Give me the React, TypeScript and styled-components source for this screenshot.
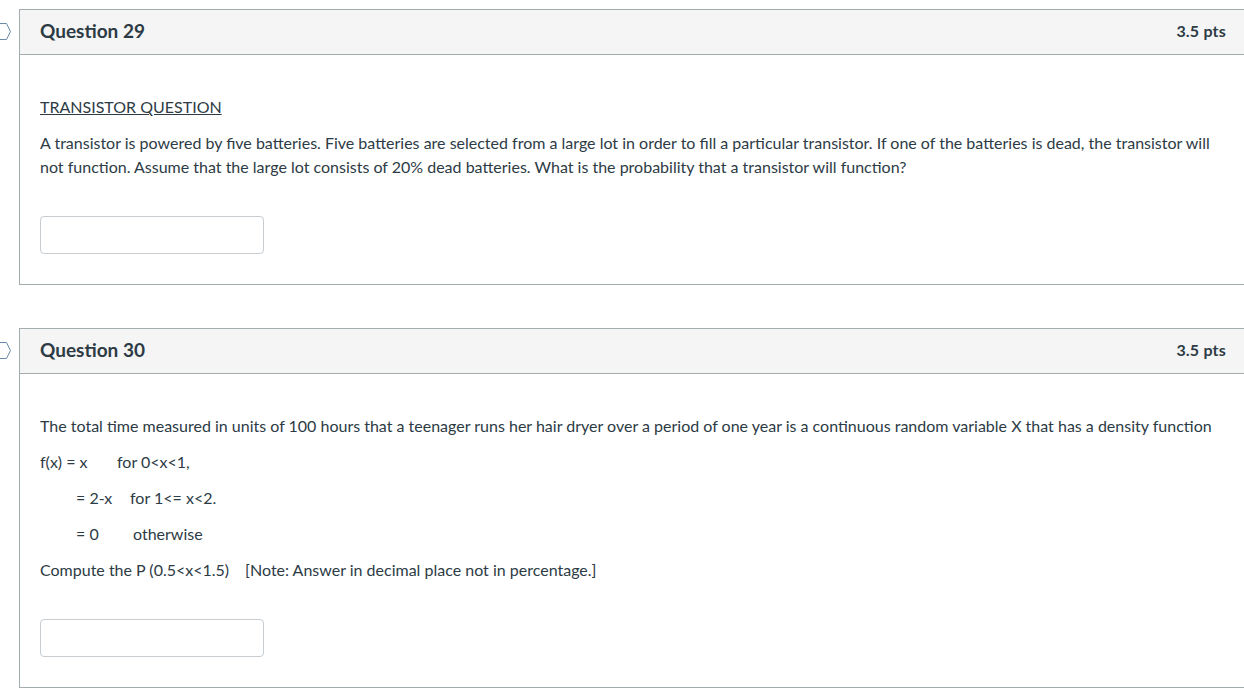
import React from 'react';
import styled, { createGlobalStyle } from 'styled-components';

const GlobalStyle = createGlobalStyle`
  html, body {
    margin: 0;
    padding: 0;
    background: #ffffff;
    overflow: hidden;
  }
  body {
    font-family: Lato, 'Noto Sans', sans-serif;
    color: #2d3b45;
  }
`;

const Page = styled.div`
  width: 1244px;
  padding-top: 9px;
  display: flex;
  flex-direction: column;
  gap: 43px;
`;

const QuestionRow = styled.div`
  display: flex;
  align-items: flex-start;
`;

const FlagCol = styled.div`
  width: 19px;
  flex-shrink: 0;
  padding-top: 13px;
`;

const Box = styled.div`
  width: 1260px;
  flex-shrink: 0;
  border: 1px solid #a5acb0;
  background: #fff;
`;

const Header = styled.div`
  display: flex;
  align-items: center;
  justify-content: space-between;
  height: 45px;
  box-sizing: border-box;
  padding: 0 54px 3px 20px;
  background: #f5f5f5;
  border-bottom: 1px solid #a5acb0;
`;

const Title = styled.div`
  font-size: 19px;
  font-weight: 700;
  color: #2d3b45;
`;

const Points = styled.div`
  font-size: 16px;
  font-weight: 700;
  color: #2d3b45;
  letter-spacing: 0.2px;
`;

const Body = styled.div`
  padding: 28px 20px 30px 20px;
`;

const Para = styled.p`
  margin: 12px 0;
  font-size: 16px;
  line-height: 24px;
  color: #2d3b45;
  max-width: 1185px;
`;

const Heading = styled.span`
  text-decoration: underline;
`;

const Line = styled.p<{ $indent?: number }>`
  margin: 12px 0;
  font-size: 16px;
  line-height: 24px;
  padding-left: ${(p) => p.$indent || 0}px;
  display: flex;
`;

const Expr = styled.span<{ $w: number }>`
  display: inline-block;
  width: ${(p) => p.$w}px;
`;

const Note = styled.span`
  margin-left: 16px;
`;

const Answer = styled.input`
  display: block;
  margin-top: 37px;
  width: 224px;
  height: 38px;
  box-sizing: border-box;
  border: 1px solid #c7cdd1;
  border-radius: 4px;
  background: #fff;
  font-family: inherit;
  font-size: 14px;
  padding: 0 8px;
`;

const Flag = () => (
  <svg width="12" height="19" viewBox="0 0 12 19">
    <path d="M-1 1.5 H6.5 L10.5 9.5 L6.5 17.5 H-1" fill="none" stroke="#6a8aa8" strokeWidth="1" />
  </svg>
);

const Question = ({ title, pts, children }: { title: string; pts: string; children: React.ReactNode }) => (
  <QuestionRow>
    <FlagCol>
      <Flag />
    </FlagCol>
    <Box>
      <Header>
        <Title>{title}</Title>
        <Points>{pts}</Points>
      </Header>
      <Body>
        {children}
        <Answer type="text" />
      </Body>
    </Box>
  </QuestionRow>
);

export default function App() {
  return (
    <>
      <GlobalStyle />
      <Page>
        <Question title="Question 29" pts="3.5 pts">
          <Para>
            <Heading>TRANSISTOR QUESTION</Heading>
          </Para>
          <Para>
            A transistor is powered by five batteries. Five batteries are selected from a large lot in order to fill a
            particular transistor. If one of the batteries is dead, the transistor will not function. Assume that the
            large lot consists of 20% dead batteries. What is the probability that a transistor will function?
          </Para>
        </Question>
        <Question title="Question 30" pts="3.5 pts">
          <Para>
            The total time measured in units of 100 hours that a teenager runs her hair dryer over a period of one year
            is a continuous random variable X that has a density function
          </Para>
          <Line>
            <Expr $w={77}>f(x) = x</Expr>
            <span>for 0&lt;x&lt;1,</span>
          </Line>
          <Line $indent={36}>
            <Expr $w={54}>= 2-x</Expr>
            <span>for 1&lt;= x&lt;2.</span>
          </Line>
          <Line $indent={36}>
            <Expr $w={57}>= 0</Expr>
            <span>otherwise</span>
          </Line>
          <Line>
            <span>Compute the P (0.5&lt;x&lt;1.5)</span>
            <Note>[Note: Answer in decimal place not in percentage.]</Note>
          </Line>
        </Question>
      </Page>
    </>
  );
}
